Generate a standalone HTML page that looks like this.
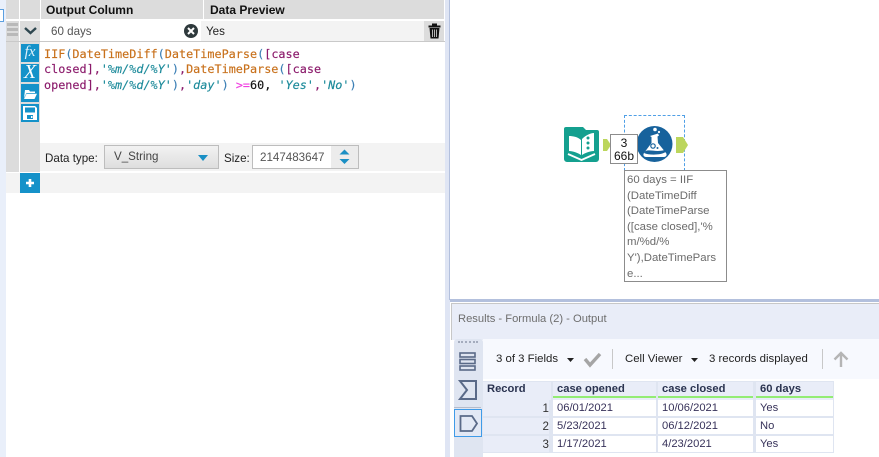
<!DOCTYPE html>
<html><head><meta charset="utf-8">
<style>
html,body{margin:0;padding:0;background:#fff}
#p{position:relative;width:879px;height:457px;overflow:hidden;background:#fff;font-family:"Liberation Sans",sans-serif;font-size:11.6px;color:#222}
#p div{position:absolute;box-sizing:border-box;white-space:nowrap}
#p svg{position:absolute;overflow:visible}
.code{font-family:"DejaVu Sans Mono","Liberation Mono",monospace;font-size:11.8px;line-height:15px;left:44px;color:#8b1a6b;-webkit-text-stroke:.15px currentColor}
.o{color:#c8701a}.b{color:#3b7fb5}.s{font-style:italic;color:#1b8a9a}.m{color:#f03fe0}.k{color:#111}
.ic{background:#1592c9;left:21px;width:18px;height:18px}
.hd{background:#e9edf8;font-weight:bold;font-size:11.2px;color:#2a3350;line-height:15px;padding-left:4px}
.val{color:#37325a;font-size:11.200px;line-height:17px;padding-left:4px;background:#fff}
.num{background:#e9edf8;text-align:right;line-height:17px;color:#333;left:483px;width:66px;height:16px}
.hh{font-weight:bold;font-size:12px;line-height:20px;color:#111;background:#dcdcdc;height:19px;top:0}
</style></head><body><div id="p">
<!-- left strip -->
<div style="left:0;top:0;width:6px;height:457px;background:#e9effa"></div>
<div style="left:0;top:9px;width:4px;height:13px;border:1px solid #5b9fe0;border-left:0;background:#fff"></div>
<!-- gutters -->
<div style="left:6px;top:0;width:13px;height:172px;background:#dcdcdc"></div>
<div style="left:20px;top:0;width:20px;height:172px;background:#dcdcdc"></div>
<div style="left:6px;top:19px;width:439px;height:2px;background:#fff"></div>
<!-- header -->
<div class="hh" style="left:41px;width:162px;padding-left:5px">Output Column</div>
<div class="hh" style="left:204px;width:200px;padding-left:6px">Data Preview</div>
<div class="hh" style="left:404px;width:40px"></div>
<!-- row -->
<div style="left:6px;top:21px;width:13px;height:20px;background:#dcdcdc"></div>
<div style="left:7px;top:23px;width:11px;height:3px;background:#b9b9b9"></div>
<div style="left:7px;top:28px;width:11px;height:3px;background:#b9b9b9"></div>
<div style="left:7px;top:33px;width:11px;height:3px;background:#b9b9b9"></div>
<svg style="left:24px;top:27px" width="13" height="8"><path d="M1 1L6.500 6L12 1" fill="none" stroke="#2f4750" stroke-width="2.400"/></svg>
<div style="left:41px;top:21px;width:160px;height:20px;background:#fff"></div>
<div style="left:51px;top:21px;font-size:11.600px;line-height:21px;color:#555">60 days</div>
<div style="left:184px;top:24px;width:14px;height:14px;border-radius:50%;background:#2f3a3d"></div>
<svg style="left:187px;top:27px" width="8" height="8"><path d="M1 1L7 7M7 1L1 7" stroke="#fff" stroke-width="2"/></svg>
<div style="left:201px;top:21px;width:243px;height:20px;background:#f3f3f3;font-size:11.600px;line-height:21px;padding-left:5px;color:#222">Yes</div>
<div style="left:424px;top:21px;width:20px;height:20px;background:#dcdcdc"></div>
<svg style="left:428px;top:23px" width="13" height="16"><path d="M4 1.500h5M0.500 3.500h12" stroke="#111" stroke-width="2"/><path d="M1.500 5h10l-1 10.500h-8z" fill="#111"/><path d="M4.500 6.500v7.500M6.500 6.500v7.500M8.500 6.500v7.500" stroke="#dcdcdc" stroke-width=".8"/></svg>
<div style="left:6px;top:41px;width:439px;height:1px;background:#c9c9c9"></div>
<!-- buttons -->
<div class="ic" style="top:44px"></div>
<div style="left:21px;top:42px;width:18px;text-align:center;font-family:'Liberation Serif',serif;font-style:italic;font-size:15px;line-height:20px;color:#dff2fb">fx</div>
<div class="ic" style="top:64px"></div>
<div style="left:21px;top:62px;width:18px;text-align:center;font-family:'Liberation Serif',serif;font-style:italic;font-size:20px;line-height:21px;color:#fff">X</div>
<div class="ic" style="top:84px"></div>
<svg style="left:23px;top:88px" width="14" height="11"><path d="M2 2h4l1 1.500h5V5H3.500L1 10z" fill="#fff"/><path d="M3.500 5.800H14L11.500 11H1z" fill="#fff"/></svg>
<div class="ic" style="top:104px"></div>
<svg style="left:23px;top:106px" width="14" height="14"><path d="M0 0h12l2 2v12H0z" fill="#fff"/><rect x="2" y="1.500" width="10" height="5" fill="#1592c9"/><rect x="4" y="9" width="6" height="4" fill="#1592c9"/><rect x="8" y="10" width="1.500" height="2" fill="#fff"/></svg>
<!-- code -->
<div class="code" style="top:47px"><span class="o">IIF</span><span class="b">(</span><span class="o">DateTimeDiff</span><span class="b">(</span><span class="o">DateTimeParse</span><span class="b">(</span>[case</div>
<div class="code" style="top:62px">closed],<span class="s">'%m/%d/%Y'</span><span class="b">)</span>,<span class="o">DateTimeParse</span><span class="b">(</span>[case</div>
<div class="code" style="top:78px">opened],<span class="s">'%m/%d/%Y'</span><span class="b">)</span>,<span class="s">'day'</span><span class="b">)</span> <span class="m">&gt;=</span><span class="k">60,</span> <span class="s">'Yes'</span>,<span class="s">'No'</span><span class="b">)</span></div>
<!-- data type -->
<div style="left:40px;top:143px;width:405px;height:28px;background:#f3f3f3"></div>
<div style="left:45px;top:151px;font-size:11.600px;line-height:16px;color:#222">Data type:</div>
<div style="left:104px;top:145px;width:115px;height:24px;border:1px solid #bdbdbd;background:linear-gradient(#f2f2f2,#dedede);line-height:22px;padding-left:9px;color:#444">V_String</div>
<svg style="left:198px;top:155px" width="10" height="6"><path d="M0 0h10L5 6z" fill="#1a8fc4"/></svg>
<div style="left:224px;top:151px;line-height:16px;color:#222">Size:</div>
<div style="left:252px;top:145px;width:107px;height:24px;border:1px solid #bdbdbd;background:#ececec"></div>
<div style="left:253px;top:146px;width:78px;height:22px;background:#fff;line-height:23px;padding-left:7px;color:#555">2147483647</div>
<svg style="left:339px;top:149px" width="11" height="16"><path d="M0.500 5.500h10L5.500 0.500z" fill="#1a8fc4"/><path d="M0.500 10h10L5.500 15z" fill="#1a8fc4"/></svg>
<!-- add row -->
<div style="left:6px;top:173px;width:439px;height:20px;background:#f3f3f3"></div>
<div style="left:20px;top:173px;width:20px;height:20px;background:#1592c9"></div>
<svg style="left:25px;top:178px" width="10" height="10"><path d="M5 1v8M1 5h8" stroke="#fff" stroke-width="2.600"/></svg>
<!-- splitter -->
<div style="left:445px;top:0;width:5px;height:457px;background:#dfe5f4"></div>
<div style="left:449px;top:0;width:1px;height:300px;background:#b3c0dd"></div>
<div style="left:450px;top:299px;width:429px;height:3px;background:#b3c0dd"></div>
<!-- canvas tools -->
<svg style="left:563px;top:126px" width="37" height="37"><path d="M1 3a2 2 0 0 1 2-2h17l3 3h11a2 2 0 0 1 2 2v27a3 3 0 0 1-3 3H4a3 3 0 0 1-3-3z" fill="#14a08f"/><path d="M6 10c4 0 9 1 12 4v15c-3-2-8-4-12-4zM31 7v18c-4 0-9 2-12 4V13c3-3 8-6 12-6z" fill="#fff"/><path d="M5 28l13.500 6L32 28" stroke="#fff" stroke-width="1.800" fill="none"/><circle cx="25" cy="12" r="1.500" fill="#14a08f"/><circle cx="25" cy="17" r="1.500" fill="#14a08f"/><circle cx="25" cy="22" r="1.500" fill="#14a08f"/></svg>
<svg style="left:603px;top:139px" width="8" height="12"><path d="M0 0h4l4 6-4 6H0z" fill="#bcd65c"/></svg>
<div style="left:624px;top:115px;width:61px;height:56px;border:1px dashed #4f9fe6;border-bottom:0"></div>
<svg style="left:636px;top:125px" width="37" height="37"><circle cx="18.500" cy="19" r="18" fill="#17629c"/><path d="M14 11l8-2.500 1 2-1.500 1 .5 6.500 8 10c1.500 2 0 4-2 4H10c-2 0-3.500-2-2-4l7.500-10V12z" fill="#fff"/><path d="M9.500 26C14 24 20 27.500 28.500 25l1 2c-4 3-16 3.500-21.500 1z" fill="#17629c"/><circle cx="17" cy="21" r="2.200" fill="none" stroke="#17629c" stroke-width="1.200"/><circle cx="21.500" cy="23" r="1" fill="#17629c"/><circle cx="19" cy="4.500" r="1.800" fill="#fff"/><circle cx="23" cy="7" r="1.100" fill="#fff"/></svg>
<svg style="left:676px;top:137px" width="12" height="16"><path d="M0 0h7l5 8-5 8H0z" fill="#bcd65c"/></svg>
<div style="left:610px;top:134px;width:28px;height:30px;border:1px solid #8c8c8c;background:#fff;text-align:center;font-size:12px;line-height:13px;color:#111;padding-top:2px">3<br>66b</div>
<div style="left:624px;top:170px;width:103px;height:112px;border:1px solid #8c8c8c;background:#fff;padding:2px 0 0 2px;font-size:11.400px;line-height:15.600px;color:#6b6b6b">60 days = IIF<br>(DateTimeDiff<br>(DateTimeParse<br>([case closed],'%<br>m/%d/%<br>Y'),DateTimePars<br>e...</div>
<!-- results -->
<div style="left:450px;top:302px;width:429px;height:155px;background:#fff"></div>
<div style="left:451px;top:303px;width:428px;height:37px;background:#e9edf8;border:1px solid #c7c7c7;border-right:0;border-bottom:0;font-size:11.200px;line-height:30px;padding-left:6px;color:#6e6e6e">Results - Formula (2) - Output</div>
<div style="left:454px;top:339px;width:29px;height:118px;background:#dfe5f1;border-radius:3px 3px 0 0"></div>
<div style="left:483px;top:339px;width:396px;height:40px;background:#f7f9fe"></div>
<div style="left:458px;top:341px;width:20px;height:2px;border-top:2px dotted #a4acbd"></div>
<svg style="left:459px;top:352px" width="17" height="19"><g fill="none" stroke="#5a6a88" stroke-width="1.600"><rect x="1" y="1" width="15" height="4"/><rect x="1" y="7.500" width="15" height="4"/><rect x="1" y="14" width="15" height="4"/></g></svg>
<svg style="left:458px;top:380px" width="19" height="20"><path d="M18 1H2l7 9-7 9h16z" fill="none" stroke="#5a6a88" stroke-width="2"/></svg>
<div style="left:454px;top:407px;width:27px;height:1px;background:#b5bccb"></div>
<div style="left:454px;top:409px;width:28px;height:28px;border:1px solid #3f9be8;background:#e3e9f5"></div>
<svg style="left:459px;top:415px" width="19" height="17"><path d="M1.500 1H13l5 7.500-5 7.500H1.500z" fill="none" stroke="#5a6a88" stroke-width="1.800"/></svg>
<!-- toolbar -->
<div style="left:496px;top:351px;line-height:17px;color:#222;font-size:11.400px">3 of 3 Fields</div>
<svg style="left:567px;top:358px" width="7" height="4"><path d="M0 0h7L3.500 4z" fill="#222"/></svg>
<svg style="left:584px;top:352px" width="17" height="15"><path d="M1 7l5 6L16 2" fill="none" stroke="#a5a5a5" stroke-width="3.400"/></svg>
<div style="left:612px;top:349px;width:1px;height:20px;background:#c8c8c8"></div>
<div style="left:625px;top:351px;line-height:17px;color:#222;font-size:11.400px">Cell Viewer</div>
<svg style="left:691px;top:358px" width="7" height="4"><path d="M0 0h7L3.500 4z" fill="#222"/></svg>
<div style="left:709px;top:351px;line-height:17px;color:#222;font-size:11.400px">3 records displayed</div>
<div style="left:822px;top:349px;width:1px;height:20px;background:#c8c8c8"></div>
<svg style="left:833px;top:351px" width="16" height="16"><path d="M8 16V2M1.500 8.500L8 2l6.500 6.500" fill="none" stroke="#b5b5b5" stroke-width="2.400"/></svg>
<!-- table -->
<div style="left:483px;top:381px;width:351px;height:72px;background:#dfe5f1"></div>
<div class="hd" style="left:483px;top:382px;width:68px;height:18px">Record</div>
<div class="hd" style="left:553px;top:382px;width:103px;height:18px">case opened</div>
<div class="hd" style="left:658px;top:382px;width:95px;height:18px">case closed</div>
<div class="hd" style="left:756px;top:382px;width:77px;height:18px">60 days</div>
<div style="left:553px;top:396px;width:103px;height:2px;background:#93ec74"></div>
<div style="left:658px;top:396px;width:95px;height:2px;background:#93ec74"></div>
<div style="left:756px;top:396px;width:77px;height:2px;background:#93ec74"></div>
<div class="num" style="top:400px">1</div>
<div class="num" style="top:418px">2</div>
<div class="num" style="top:436px">3</div>
<div class="val" style="left:553px;top:400px;width:103px;height:16px">06/01/2021</div>
<div class="val" style="left:658px;top:400px;width:95px;height:16px">10/06/2021</div>
<div class="val" style="left:756px;top:400px;width:77px;height:16px">Yes</div>
<div class="val" style="left:553px;top:418px;width:103px;height:16px">5/23/2021</div>
<div class="val" style="left:658px;top:418px;width:95px;height:16px">06/12/2021</div>
<div class="val" style="left:756px;top:418px;width:77px;height:16px">No</div>
<div class="val" style="left:553px;top:436px;width:103px;height:16px">1/17/2021</div>
<div class="val" style="left:658px;top:436px;width:95px;height:16px">4/23/2021</div>
<div class="val" style="left:756px;top:436px;width:77px;height:16px">Yes</div>
</div></body></html>
